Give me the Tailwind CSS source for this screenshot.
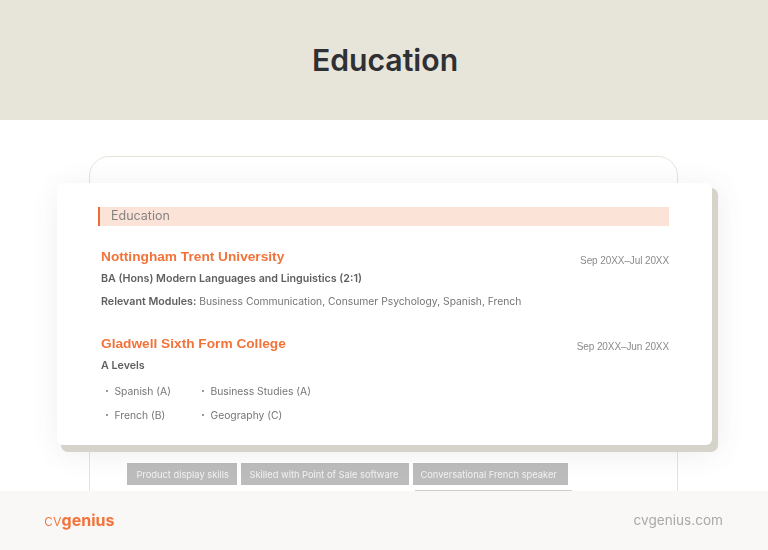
<!DOCTYPE html>
<html lang="en">
<head>
  <meta charset="UTF-8">
  <meta name="viewport" content="width=device-width, initial-scale=1.0">
  <title>Education</title>
  <script src="https://cdn.jsdelivr.net/npm/@tailwindcss/browser@4"></script>
</head>
<body class="bg-white font-['Inter',sans-serif] w-[768px] h-[550px] overflow-hidden">
  <header class="h-[120px] bg-[#e7e4da] flex items-center justify-center pl-[2px]">
    <h1 class="text-[30.2px] leading-none font-semibold text-[#2f3033]">Education</h1>
  </header>

  <main class="relative h-[371px] overflow-hidden blur-[0.35px]">
    <!-- resume behind the card -->
    <div class="ml-[89px] mt-[36px] w-[589px] h-[400px] border border-[#e6e3da] rounded-[20px] pl-[36.5px] pt-[306px]">
      <div class="flex gap-x-[4px] text-[9.3px] text-[#f3f3f3]">
        <span class="w-[110px] h-[22px] pl-[10px] pt-[1px] bg-[#bcbcbc] flex items-center">Product display skills</span>
        <span class="w-[168px] h-[22px] pl-[9px] pt-[1px] bg-[#bcbcbc] flex items-center">Skilled with Point of Sale software</span>
        <span class="w-[155px] h-[22px] pl-[8px] pt-[1px] bg-[#bcbcbc] flex items-center">Conversational French speaker</span>
      </div>
      <div class="ml-[288px] mt-[5px] w-[157px] h-[22px] bg-[#cfcfcf]"></div>
    </div>

    <!-- education card -->
    <div class="absolute left-[57px] top-[63px] w-[655px] h-[262px] bg-white rounded-[6px] shadow-[5px_6px_0_1px_#d6d3ca,4px_6px_30px_rgba(90,85,70,0.12)] pl-[41px] pr-[43px] pt-[24px] text-[#757575]">
      <div class="h-[19px] bg-[#fce3d8] border-l-2 border-[#ed6b35] pl-[11px] flex items-center text-[12.5px] text-[#838383]">Education</div>

      <div class="mt-[22px] pl-[3px]">
        <div class="h-[18px] flex justify-between items-center">
          <h2 class="font-['Liberation_Sans',sans-serif] font-bold text-[13.7px] leading-[18px] text-[#f2733a]">Nottingham Trent University</h2>
          <span class="font-['Liberation_Sans',sans-serif] text-[10px] tracking-[-0.1px] text-[#8b8b8b] mt-[6px]">Sep 20XX–Jul 20XX</span>
        </div>
        <p class="mt-[6px] text-[10.7px] leading-[14px] font-semibold text-[#5f5f5f]">BA (Hons) Modern Languages and Linguistics (2:1)</p>
        <p class="mt-[8px] text-[10.3px] leading-[14px]"><span class="text-[10.7px] font-semibold text-[#5f5f5f]">Relevant Modules:</span> Business Communication, Consumer Psychology, Spanish, French</p>
      </div>

      <div class="mt-[26px] pl-[3px]">
        <div class="h-[18px] flex justify-between items-center">
          <h2 class="font-['Liberation_Sans',sans-serif] font-bold text-[13.7px] leading-[18px] text-[#f2733a]">Gladwell Sixth Form College</h2>
          <span class="font-['Liberation_Sans',sans-serif] text-[10px] tracking-[-0.1px] text-[#8b8b8b] mt-[4px]">Sep 20XX–Jun 20XX</span>
        </div>
        <p class="mt-[6px] text-[10.7px] leading-[14px] font-semibold text-[#5f5f5f]">A Levels</p>
        <ul class="mt-[11px] grid grid-cols-[96px_1fr] gap-y-[10px] w-[240px] text-[10.3px] leading-[14px]">
          <li class="flex items-center"><span class="w-[2px] h-[2px] rounded-full bg-[#757575] ml-[5px] mr-[6.5px]"></span>Spanish (A)</li>
          <li class="flex items-center"><span class="w-[2px] h-[2px] rounded-full bg-[#757575] ml-[5px] mr-[6.5px]"></span>Business Studies (A)</li>
          <li class="flex items-center"><span class="w-[2px] h-[2px] rounded-full bg-[#757575] ml-[5px] mr-[6.5px]"></span>French (B)</li>
          <li class="flex items-center"><span class="w-[2px] h-[2px] rounded-full bg-[#757575] ml-[5px] mr-[6.5px]"></span>Geography (C)</li>
        </ul>
      </div>
    </div>
  </main>

  <footer class="h-[59px] bg-[#f9f8f6] flex items-center justify-between pl-[44px] pr-[45px] blur-[0.35px]">
    <span class="text-[16px] leading-none text-[#f2733a] mb-[2px]"><span class="font-light">cv</span><span class="font-bold">genius</span></span>
    <span class="text-[13.6px] text-[#a9a9a9]">cvgenius.com</span>
  </footer>
</body>
</html>
